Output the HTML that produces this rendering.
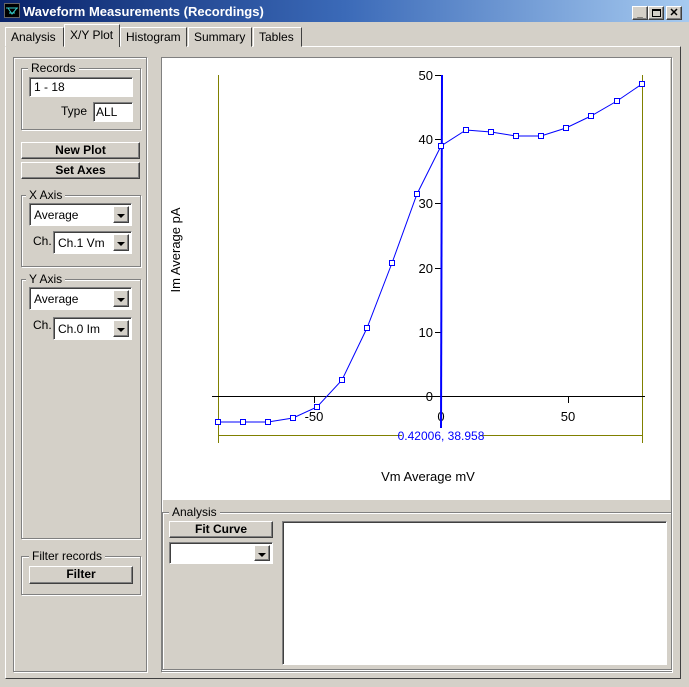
<!DOCTYPE html>
<html><head><style>
*{margin:0;padding:0;box-sizing:border-box}
body{width:689px;height:687px;background:#d4d0c8;font-family:"Liberation Sans",sans-serif;font-size:12px;position:relative;overflow:hidden}
.a{position:absolute}
.grp{position:absolute;border:1px solid #808080;box-shadow:1px 1px 0 #fff, inset 1px 1px 0 #fff}
.lbl{position:absolute;background:#d4d0c8;padding:0 3px;top:-8px;left:6px;font-size:12px;line-height:14px}
.btn{position:absolute;background:#d4d0c8;border:1px solid;border-color:#fff #404040 #404040 #fff;box-shadow:inset -1px -1px 0 #808080;font-weight:bold;text-align:center;font-size:12px;line-height:14px}
.inp{position:absolute;background:#fff;border:1px solid;border-color:#808080 #fff #fff #808080;box-shadow:inset 1px 1px 0 #404040;font-size:12px;padding:2px 4px;line-height:14px}
.sel{padding-top:4px}
.dd{position:absolute;right:2px;top:2px;bottom:2px;width:16px;background:#d4d0c8;border:1px solid;border-color:#fff #404040 #404040 #fff;box-shadow:inset -1px -1px 0 #808080}
.dd:after{content:"";position:absolute;left:3px;top:7px;border:4px solid transparent;border-top:4px solid #000;border-bottom:none}
.tab{position:absolute;top:27px;height:20px;border:1px solid;border-color:#fff #404040 transparent #fff;padding:2px 5px;font-size:12px;background:#d4d0c8}
</style></head><body>
<div class="a" style="left:0;top:0;width:689px;height:22px;background:linear-gradient(90deg,#0a246a,#3b6ab8 50%,#a6caf0)"></div>
<div class="a" style="left:4px;top:3px;width:16px;height:15px;background:#000;border:1px solid #666"><svg width="14" height="13"><path d="M1 4h12M3 4l4 6 5-6M4 9h6" stroke="#3cc" fill="none"/></svg></div>
<div class="a" style="left:23px;top:4px;color:#fff;font-weight:bold;font-size:13px">Waveform Measurements (Recordings)</div>
<div class="btn" style="left:632px;top:6px;width:16px;height:14px;font-size:10px">_</div>
<div class="btn" style="left:648px;top:6px;width:16px;height:14px"><div class="a" style="left:3px;top:2px;width:9px;height:8px;border:1px solid #000;border-top-width:2px"></div></div>
<div class="btn" style="left:666px;top:6px;width:16px;height:14px;font-size:11px;line-height:12px">✕</div>
<div class="a" style="left:5px;top:46px;width:676px;height:633px;border:1px solid;border-color:#fff #404040 #404040 #fff"></div>
<div class="tab" style="left:5px;width:59px">Analysis</div>
<div class="tab" style="left:64px;top:24px;height:23px;width:56px;border-bottom:none;z-index:2;padding-top:3px">X/Y Plot</div>
<div class="tab" style="left:120px;width:67px">Histogram</div>
<div class="tab" style="left:188px;width:64px">Summary</div>
<div class="tab" style="left:253px;width:49px">Tables</div>
<!-- left panel -->
<div class="grp" style="left:13px;top:57px;width:134px;height:615px"></div>
<div class="grp" style="left:21px;top:68px;width:120px;height:62px"><span class="lbl">Records</span></div>
<div class="inp" style="left:29px;top:77px;width:104px;height:20px">1 - 18</div>
<div class="a" style="left:61px;top:104px">Type</div>
<div class="inp" style="left:93px;top:102px;width:40px;height:20px;padding:2px 2px">ALL</div>
<div class="btn" style="left:21px;top:142px;width:119px;height:17px">New Plot</div>
<div class="btn" style="left:21px;top:162px;width:119px;height:17px">Set Axes</div>
<div class="grp" style="left:21px;top:195px;width:120px;height:72px"><span class="lbl" style="left:4px">X Axis</span></div>
<div class="inp sel" style="left:29px;top:203px;width:103px;height:23px">Average<div class="dd"></div></div>
<div class="a" style="left:33px;top:234px">Ch.</div>
<div class="inp sel" style="left:53px;top:231px;width:79px;height:23px">Ch.1 Vm<div class="dd"></div></div>
<div class="grp" style="left:21px;top:279px;width:120px;height:260px"><span class="lbl" style="left:4px">Y Axis</span></div>
<div class="inp sel" style="left:29px;top:287px;width:103px;height:23px">Average<div class="dd"></div></div>
<div class="a" style="left:33px;top:318px">Ch.</div>
<div class="inp sel" style="left:53px;top:317px;width:79px;height:23px">Ch.0 Im<div class="dd"></div></div>
<div class="grp" style="left:21px;top:556px;width:120px;height:39px"><span class="lbl" style="left:7px">Filter records</span></div>
<div class="btn" style="left:29px;top:566px;width:104px;height:18px">Filter</div>
<!-- right -->
<div class="grp" style="left:161px;top:57px;width:511px;height:615px;border-color:#808080"></div>
<div class="a" style="left:162px;top:58px;width:508px;height:442px;background:#fff"></div>
<svg class="a" style="left:0;top:0" width="689" height="687" font-family="Liberation Sans" font-size="12">
<g stroke="#808000"><line x1="218.5" y1="75" x2="218.5" y2="443"/><line x1="642.5" y1="75" x2="642.5" y2="443"/><line x1="218" y1="435.5" x2="642" y2="435.5"/></g>
<rect x="402" y="429" width="78" height="13" fill="#fff"/>
<text x="441" y="440" fill="#0000ff" text-anchor="middle">0.42006, 38.958</text>
<g stroke="#000"><line x1="212" y1="396.5" x2="645" y2="396.5"/>
<line x1="314.5" y1="396" x2="314.5" y2="403"/><line x1="568.5" y1="396" x2="568.5" y2="403"/>
<line x1="435" y1="75.5" x2="441" y2="75.5"/><line x1="435" y1="139.5" x2="441" y2="139.5"/><line x1="435" y1="203.5" x2="441" y2="203.5"/><line x1="435" y1="268.5" x2="441" y2="268.5"/><line x1="435" y1="332.5" x2="441" y2="332.5"/><line x1="435" y1="396.5" x2="441" y2="396.5"/></g>
<g font-size="13" text-anchor="end"><text x="433" y="80">50</text><text x="433" y="144">40</text><text x="433" y="208">30</text><text x="433" y="273">20</text><text x="433" y="337">10</text><text x="433" y="401">0</text></g>
<g font-size="13" text-anchor="middle"><text x="314" y="421">-50</text><text x="441" y="421">0</text><text x="568" y="421">50</text></g>
<line x1="442" y1="75" x2="441" y2="428" stroke="#0000ff" stroke-width="2"/>
<polyline fill="none" stroke="#0000ff" points="218,422 243,422 268,422 293,418 317,407 342,380 367,328 392,263 417,194 441,146 466,130 491,132 516,136 541,136 566,128 591,116 617,101 642,84"/>
<g fill="#fff" stroke="#0000ff">
<rect x="215.5" y="419.5" width="5" height="5"/><rect x="240.5" y="419.5" width="5" height="5"/><rect x="265.5" y="419.5" width="5" height="5"/><rect x="290.5" y="415.5" width="5" height="5"/><rect x="314.5" y="404.5" width="5" height="5"/><rect x="339.5" y="377.5" width="5" height="5"/><rect x="364.5" y="325.5" width="5" height="5"/><rect x="389.5" y="260.5" width="5" height="5"/><rect x="414.5" y="191.5" width="5" height="5"/><rect x="438.5" y="143.5" width="5" height="5"/><rect x="463.5" y="127.5" width="5" height="5"/><rect x="488.5" y="129.5" width="5" height="5"/><rect x="513.5" y="133.5" width="5" height="5"/><rect x="538.5" y="133.5" width="5" height="5"/><rect x="563.5" y="125.5" width="5" height="5"/><rect x="588.5" y="113.5" width="5" height="5"/><rect x="614.5" y="98.5" width="5" height="5"/><rect x="639.5" y="81.5" width="5" height="5"/></g>
<text x="428" y="481" font-size="13" text-anchor="middle">Vm Average mV</text>
<text transform="translate(180,250) rotate(-90)" font-size="13" text-anchor="middle">Im Average pA</text>
</svg>
<div class="grp" style="left:162px;top:512px;width:510px;height:158px"><span class="lbl" style="left:6px">Analysis</span></div>
<div class="btn" style="left:169px;top:521px;width:104px;height:17px">Fit Curve</div>
<div class="inp" style="left:169px;top:542px;width:104px;height:22px"><div class="dd"></div></div>
<div class="inp" style="left:282px;top:521px;width:385px;height:144px"></div>
</body></html>
